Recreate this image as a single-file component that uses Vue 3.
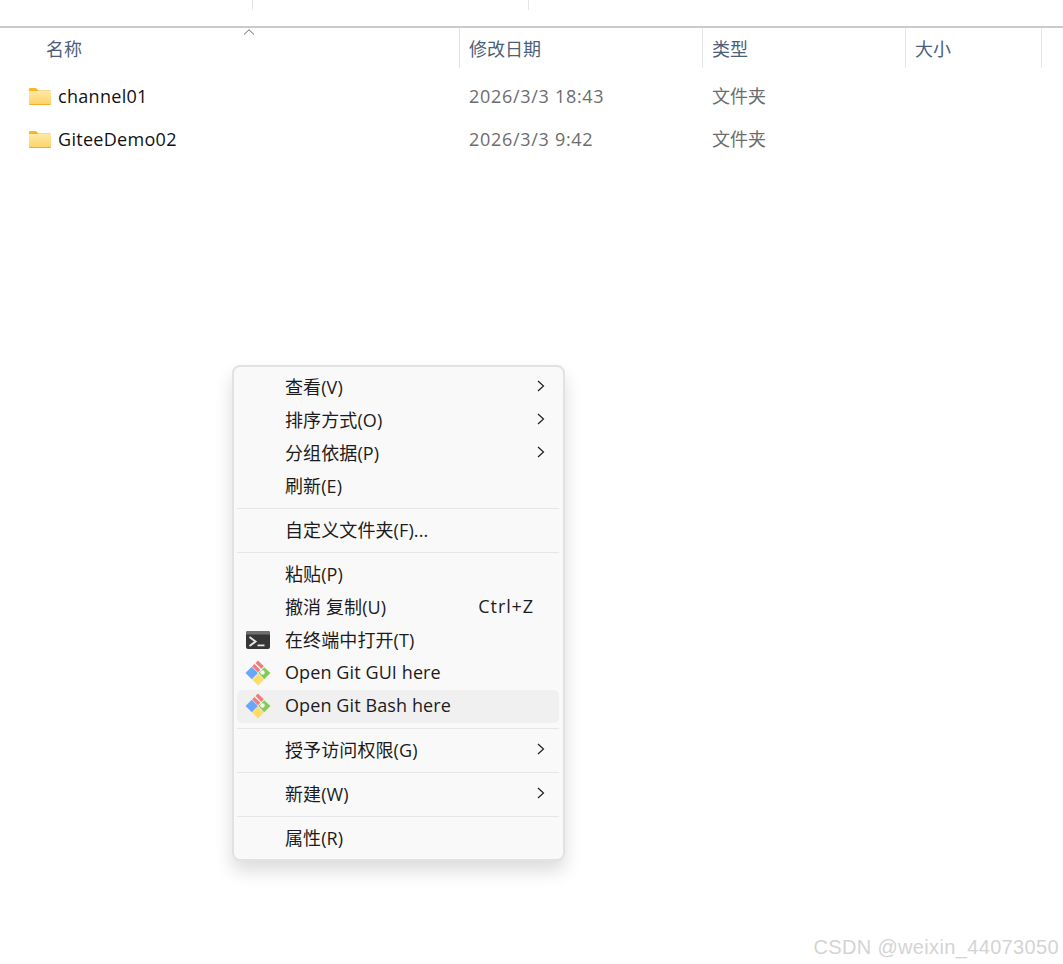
<template>
  <div class="explorer">
    <div class="toolbar-strip">
      <span class="tick tick-a"></span>
      <span class="tick tick-b"></span>
    </div>

    <div class="list-header">
      <div class="col col-name">名称</div>
      <div class="col col-date">修改日期</div>
      <div class="col col-type">类型</div>
      <div class="col col-size">大小</div>
      <svg class="sort-arrow" width="12" height="6" viewBox="0 0 12 6">
        <path d="M1 5.5 L6 .8 L11 5.5" fill="none" stroke="#6a6a6a" stroke-width="1" />
      </svg>
    </div>

    <div class="file-list">
      <div v-for="file in files" :key="file.name" class="file-row">
        <div class="file-name">
          <svg class="folder" width="24" height="20" viewBox="0 0 24 20">
            <defs>
              <linearGradient id="folderFill" x1="0" y1="0" x2="0" y2="1">
                <stop offset="0" stop-color="#ffe9a6" />
                <stop offset="1" stop-color="#fdd36a" />
              </linearGradient>
            </defs>
            <path d="M1 3 a1 1 0 0 1 1-1 h6 l2 2 v2 H1z" fill="#fbb81f" />
            <rect x="1" y="4.500" width="22" height="14.500" rx="1" fill="#f0ae2a" />
            <rect x="1" y="5" width="22" height="13" fill="url(#folderFill)" />
          </svg>
          <span class="name-text">{{ file.name }}</span>
        </div>
        <div class="file-date">{{ file.date }}</div>
        <div class="file-type">{{ file.type }}</div>
      </div>
    </div>

    <div class="context-menu">
      <template v-for="(group, g) in menuGroups" :key="g">
        <div v-if="g > 0" class="divider"></div>
        <div
          v-for="item in group"
          :key="item.label"
          class="menu-item"
          :class="{ active: item.active }"
        >
          <span class="menu-icon">
            <svg v-if="item.icon === 'terminal'" width="24" height="18" viewBox="0 0 24 18">
              <rect width="24" height="18" rx="2" fill="#363636" />
              <path d="M0 2 a2 2 0 0 1 2-2 h20 a2 2 0 0 1 2 2 v1.500 H0z" fill="#707070" />
              <path d="M3.500 6 L9.500 10.500 L3.500 15" fill="none" stroke="#e4e4e4" stroke-width="2" />
              <rect x="11.500" y="13.500" width="7" height="1.800" fill="#e4e4e4" />
            </svg>
            <svg v-else-if="item.icon === 'git'" width="26" height="26" viewBox="0 0 26 26">
              <path d="M.5 13 L6.800 6.700 L12.600 12.500 L12.600 13.500 L6.800 19.300z" fill="#6aa6fa" />
              <path d="M13.400 13 L19.200 7.200 L25.500 13 L19.200 19.300z" fill="#85cc55" />
              <path d="M7.200 19.500 L13 13.700 L18.800 19.500 L13 25.500z" fill="#fcdc6c" />
              <path d="M7.200 6.300 L13 .5 L18.800 6.300 L13 12.300z" fill="#f47a7a" />
              <path d="M10 3.500 L16.500 10" stroke="#f9f9f9" stroke-width="1.500" />
              <circle cx="17.500" cy="12.500" r="2.200" fill="#f9f9f9" />
            </svg>
          </span>
          <span class="menu-label">{{ item.label }}</span>
          <span v-if="item.shortcut" class="menu-shortcut">{{ item.shortcut }}</span>
          <svg v-if="item.sub" class="menu-chevron" width="8" height="12" viewBox="0 0 8 12">
            <path d="M1 1 L6.500 6 L1 11" fill="none" stroke="#1f1f1f" stroke-width="1.200" />
          </svg>
        </div>
      </template>
    </div>

    <div class="watermark">CSDN @weixin_44073050</div>
  </div>
</template>

<script setup>
const files = [
  { name: 'channel01', date: '2026/3/3 18:43', type: '文件夹' },
  { name: 'GiteeDemo02', date: '2026/3/3 9:42', type: '文件夹' }
]

const menuGroups = [
  [
    { label: '查看(V)', sub: true },
    { label: '排序方式(O)', sub: true },
    { label: '分组依据(P)', sub: true },
    { label: '刷新(E)' }
  ],
  [{ label: '自定义文件夹(F)...' }],
  [
    { label: '粘贴(P)' },
    { label: '撤消 复制(U)', shortcut: 'Ctrl+Z' },
    { label: '在终端中打开(T)', icon: 'terminal' },
    { label: 'Open Git GUI here', icon: 'git' },
    { label: 'Open Git Bash here', icon: 'git', active: true }
  ],
  [{ label: '授予访问权限(G)', sub: true }],
  [{ label: '新建(W)', sub: true }],
  [{ label: '属性(R)' }]
]
</script>

<style>
html,
body {
  margin: 0;
  background: #fff;
}
</style>

<style scoped>
.explorer {
  position: relative;
  width: 1063px;
  height: 964px;
  overflow: hidden;
  background: #fff;
  font-family: "Open Sans", "Noto Sans CJK SC", sans-serif;
  font-size: 18px;
  color: #1a1a1a;
}

.toolbar-strip {
  position: relative;
  height: 26px;
  border-bottom: 2px solid #cbc9c9;
}

.tick {
  position: absolute;
  top: 0;
  width: 1px;
  height: 10px;
  background: #e5e5e5;
}

.tick-a {
  left: 252px;
}

.tick-b {
  left: 528px;
}

.list-header {
  position: relative;
  display: grid;
  grid-template-columns: 460px 243px 203px 136px;
  height: 40px;
  color: #4c607a;
}

.col {
  display: flex;
  align-items: center;
  padding-left: 9px;
  border-right: 1px solid #e5e5e5;
  box-sizing: border-box;
}

.col-name {
  padding-left: 46px;
}

.sort-arrow {
  position: absolute;
  left: 243px;
  top: 1px;
}

.file-list {
  display: flex;
  flex-direction: column;
  padding-top: 6px;
}

.file-row {
  display: grid;
  grid-template-columns: 460px 243px 203px;
  align-items: center;
  height: 43px;
  color: #6d6d6d;
}

.file-name {
  display: flex;
  align-items: center;
  gap: 6px;
  padding-left: 28px;
  color: #111;
}

.name-text {
  letter-spacing: 0.3px;
}

.file-date,
.file-type {
  padding-left: 9px;
}

.file-date {
  letter-spacing: 0.7px;
}

.file-type {
  padding-bottom: 1px;
}

.context-menu {
  position: absolute;
  left: 232px;
  top: 365px;
  width: 333px;
  box-sizing: border-box;
  padding: 4px 4px 4px 3px;
  border: 2px solid #e2e2e2;
  border-radius: 8px;
  background: #f9f9f9;
  box-shadow: 0 10px 18px rgba(0, 0, 0, 0.14);
}

.menu-item {
  display: flex;
  align-items: center;
  height: 33px;
  border-radius: 5px;
  color: #1c1c1c;
}

.menu-item.active {
  background: #f0f0f0;
}

.menu-icon {
  display: flex;
  align-items: center;
  justify-content: center;
  width: 48px;
  height: 33px;
  padding: 0 6px 2px 0;
  box-sizing: border-box;
  flex-shrink: 0;
}

.menu-label {
  flex: 1;
  padding-bottom: 3px;
  letter-spacing: 0.1px;
  white-space: nowrap;
}

.menu-shortcut {
  margin-right: 25px;
  padding-bottom: 3px;
  letter-spacing: 0.9px;
}

.menu-chevron {
  margin: 0 14px 3px 0;
}

.divider {
  height: 1px;
  margin: 5px 0;
  background: #e6e6e6;
}

.watermark {
  position: absolute;
  right: 4px;
  top: 936px;
  font-family: "Liberation Sans", sans-serif;
  font-size: 20px;
  letter-spacing: 0.35px;
  color: #d4d4d4;
}
</style>
